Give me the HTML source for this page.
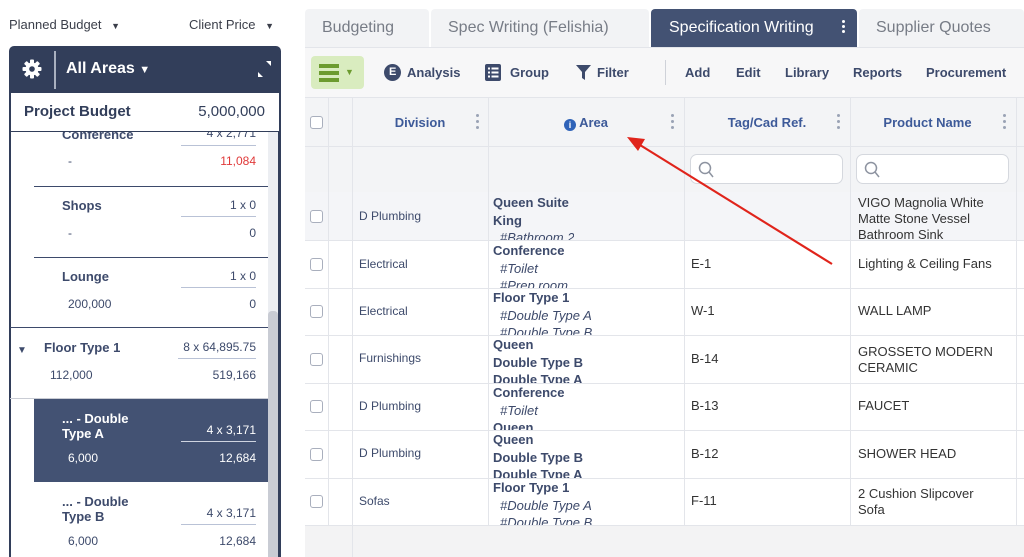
<!DOCTYPE html>
<html><head><meta charset="utf-8"><style>
*{margin:0;padding:0;box-sizing:border-box}
html,body{width:1024px;height:557px;overflow:hidden}
body{background:#fff;font-family:"Liberation Sans",sans-serif;color:#3d4a6b;position:relative}
.a{position:absolute;white-space:nowrap}
.b{font-weight:bold}
.r{text-align:right}
.ln{position:absolute;height:1px;background:#3d4a6b}
.ul{position:absolute;height:1px;background:#b9c2d6}
.cb{position:absolute;width:13px;height:13px;border:1px solid #a9afbd;border-radius:3px;background:#fff}
.vl{position:absolute;width:1px;background:#e3e5ea}
.hl{position:absolute;height:1px;background:#e3e5ea}
.dots{position:absolute;width:3px}
.dots i{display:block;width:3px;height:3px;border-radius:50%;background:#9aa3b5;margin-bottom:3px}
.it{font-style:italic}
</style></head><body>

<div class="a" style="left:9px;top:17px;font-size:13px;color:#3b3f4a">Planned Budget <span style="font-size:9px;margin-left:6px">▼</span></div>
<div class="a" style="left:189px;top:17px;font-size:13px;color:#3b3f4a">Client Price <span style="font-size:9px;margin-left:6px">▼</span></div>

<div class="a" style="left:9px;top:46px;width:272px;height:511px;background:#323e5a;border-radius:5px 5px 0 0"></div>
<div class="a" style="left:11px;top:93px;width:268px;height:464px;background:#fff"></div>
<svg class="a" style="left:22px;top:59px" width="20" height="20" viewBox="0 0 20 20"><g fill="#fff"><circle cx="10" cy="10" r="6.5"/><rect x="8" y="0.5" width="4" height="19" rx="1"/><rect x="8" y="0.5" width="4" height="19" rx="1" transform="rotate(45 10 10)"/><rect x="8" y="0.5" width="4" height="19" rx="1" transform="rotate(90 10 10)"/><rect x="8" y="0.5" width="4" height="19" rx="1" transform="rotate(135 10 10)"/></g><circle cx="10" cy="10" r="2.8" fill="#323e5a"/></svg>
<div class="a" style="left:54px;top:51px;width:2px;height:38px;background:#a9b0bf"></div>
<div class="a b" style="left:66px;top:60px;font-size:16px;color:#fff">All Areas <span style="font-size:11px">▼</span></div>
<svg class="a" style="left:256px;top:60px" width="16" height="18"><path d="M10 1 L15 1 L15 6Z" fill="#fff"/><path d="M2 12 L7 12 L7 17Z" fill="#fff" transform="rotate(180 4.5 14.5)"/></svg>
<div class="a" style="left:10px;top:93px;width:270px;height:39px;background:#fff;border:1px solid #323e5a;border-top:none"></div>
<div class="a b" style="left:24px;top:103px;font-size:15px;color:#323e5a">Project Budget</div>
<div class="a" style="left:160px;top:103px;width:105px;font-size:15px;color:#323e5a;text-align:right">5,000,000</div>

<div class="a" style="left:268px;top:132px;width:10px;height:430px;background:#eceef2"></div>
<div class="a" style="left:268px;top:311px;width:10px;height:250px;background:#c9ccd4;border-radius:4px"></div>
<div class="a" style="left:278px;top:132px;width:2px;height:430px;background:#323e5a"></div>

<div class="a b" style="left:62px;top:127px;font-size:13px;clip-path:inset(5px 0 0 0)">Conference</div>
<div class="a r" style="left:180px;top:126px;width:76px;font-size:12px;clip-path:inset(6px 0 0 0)">4 x 2,771</div>
<div class="ul" style="left:181px;top:145px;width:75px"></div>
<div class="a" style="left:68px;top:154px;font-size:12px">-</div>
<div class="a r" style="left:180px;top:154px;width:76px;font-size:12px;color:#e03a3a">11,084</div>
<div class="ln" style="left:34px;top:186px;width:234px"></div>

<div class="a b" style="left:62px;top:198px;font-size:13px">Shops</div>
<div class="a r" style="left:180px;top:198px;width:76px;font-size:12px">1 x 0</div>
<div class="ul" style="left:181px;top:216px;width:75px"></div>
<div class="a" style="left:68px;top:226px;font-size:12px">-</div>
<div class="a r" style="left:180px;top:226px;width:76px;font-size:12px">0</div>
<div class="ln" style="left:34px;top:257px;width:234px"></div>

<div class="a b" style="left:62px;top:269px;font-size:13px">Lounge</div>
<div class="a r" style="left:180px;top:269px;width:76px;font-size:12px">1 x 0</div>
<div class="ul" style="left:181px;top:287px;width:75px"></div>
<div class="a" style="left:68px;top:297px;font-size:12px">200,000</div>
<div class="a r" style="left:180px;top:297px;width:76px;font-size:12px">0</div>
<div class="ln" style="left:10px;top:327px;width:258px"></div>

<div class="a" style="left:17px;top:345px;font-size:10px">▼</div>
<div class="a b" style="left:44px;top:340px;font-size:13px">Floor Type 1</div>
<div class="a r" style="left:160px;top:340px;width:96px;font-size:12px">8 x 64,895.75</div>
<div class="ul" style="left:178px;top:358px;width:78px"></div>
<div class="a" style="left:50px;top:368px;font-size:12px">112,000</div>
<div class="a r" style="left:180px;top:368px;width:76px;font-size:12px">519,166</div>
<div class="hl" style="left:10px;top:398px;width:258px;background:#c9ccd4"></div>

<div class="a" style="left:34px;top:399px;width:234px;height:83px;background:#435273"></div>
<div class="a b" style="left:62px;top:411px;font-size:13px;color:#fff;line-height:15px">... - Double<br>Type A</div>
<div class="a r" style="left:180px;top:423px;width:76px;font-size:12px;color:#fff">4 x 3,171</div>
<div class="ul" style="left:181px;top:441px;width:75px;background:#cfd4e0"></div>
<div class="a" style="left:68px;top:451px;font-size:12px;color:#fff">6,000</div>
<div class="a r" style="left:180px;top:451px;width:76px;font-size:12px;color:#fff">12,684</div>

<div class="a b" style="left:62px;top:494px;font-size:13px;line-height:15px">... - Double<br>Type B</div>
<div class="a r" style="left:180px;top:506px;width:76px;font-size:12px">4 x 3,171</div>
<div class="ul" style="left:181px;top:524px;width:75px"></div>
<div class="a" style="left:68px;top:534px;font-size:12px">6,000</div>
<div class="a r" style="left:180px;top:534px;width:76px;font-size:12px">12,684</div>

<!-- tabs -->
<div class="a" style="left:305px;top:9px;width:124px;height:38px;background:#f2f3f5;border-radius:4px 4px 0 0;font-size:16px;color:#777c86;padding:10px 0 0 17px">Budgeting</div>
<div class="a" style="left:431px;top:9px;width:218px;height:38px;background:#f2f3f5;border-radius:4px 4px 0 0;font-size:16px;color:#777c86;padding:10px 0 0 17px">Spec Writing (Felishia)</div>
<div class="a" style="left:651px;top:9px;width:206px;height:38px;background:#435273;border-radius:4px 4px 0 0;font-size:16px;color:#fff;padding:10px 0 0 18px">Specification Writing</div>
<div class="dots" style="left:842px;top:20px"><i style="background:#fff;margin-bottom:2px"></i><i style="background:#fff;margin-bottom:2px"></i><i style="background:#fff"></i></div>
<div class="a" style="left:859px;top:9px;width:165px;height:38px;background:#f2f3f5;border-radius:4px 4px 0 0;font-size:16px;color:#777c86;padding:10px 0 0 17px">Supplier Quotes</div>

<!-- toolbar -->
<div class="a" style="left:305px;top:47px;width:719px;height:51px;background:#f7f7f8;border-top:1px solid #e3e5ea;border-bottom:1px solid #e3e5ea"></div>
<div class="a" style="left:311px;top:56px;width:53px;height:33px;background:#d9ecbf;border-radius:4px"></div>
<div class="a" style="left:319px;top:64px;width:20px;height:3.5px;background:#6c9b2f"></div>
<div class="a" style="left:319px;top:71px;width:20px;height:3.5px;background:#6c9b2f"></div>
<div class="a" style="left:319px;top:78px;width:20px;height:3.5px;background:#6c9b2f"></div>
<div class="a" style="left:345px;top:67px;font-size:9px;color:#6c9b2f">▼</div>
<div class="a" style="left:384px;top:64px;width:17px;height:17px;border-radius:50%;background:#3d4a6b"></div>
<div class="a b" style="left:389px;top:66px;font-size:11px;color:#fff">E</div>
<div class="a b" style="left:407px;top:65px;font-size:13px">Analysis</div>
<svg class="a" style="left:485px;top:64px" width="16" height="17"><rect width="16" height="17" rx="2" fill="#3d4a6b"/><g fill="#fff"><rect x="3" y="3.5" width="2" height="2"/><rect x="6.5" y="3.5" width="7" height="2"/><rect x="3" y="7.5" width="2" height="2"/><rect x="6.5" y="7.5" width="7" height="2"/><rect x="3" y="11.5" width="2" height="2"/><rect x="6.5" y="11.5" width="7" height="2"/></g></svg>
<div class="a b" style="left:510px;top:65px;font-size:13px">Group</div>
<svg class="a" style="left:576px;top:65px" width="15" height="16"><path d="M0 0H15L9 7V15L6 13V7Z" fill="#3d4a6b"/></svg>
<div class="a b" style="left:597px;top:65px;font-size:13px">Filter</div>
<div class="a" style="left:665px;top:60px;width:1px;height:25px;background:#cfd2d9"></div>
<div class="a b" style="left:685px;top:65px;font-size:13px">Add</div>
<div class="a b" style="left:736px;top:65px;font-size:13px">Edit</div>
<div class="a b" style="left:785px;top:65px;font-size:13px">Library</div>
<div class="a b" style="left:853px;top:65px;font-size:13px">Reports</div>
<div class="a b" style="left:926px;top:65px;font-size:13px">Procurement</div>

<!-- table header -->
<div class="a" style="left:305px;top:98px;width:719px;height:94px;background:#f3f4f6"></div>
<div class="cb" style="left:310px;top:116px"></div>
<div class="a b" style="left:352px;top:115px;width:136px;text-align:center;font-size:13px;color:#3d5a99">Division</div>
<div class="a b" style="left:488px;top:115px;width:196px;text-align:center;font-size:13px;color:#3d5a99"><span style="display:inline-block;width:12px;height:12px;border-radius:50%;background:#2f63b8;color:#fff;font-size:9px;line-height:12px;text-align:center;vertical-align:-1px">i</span> Area</div>
<div class="a b" style="left:684px;top:115px;width:166px;text-align:center;font-size:13px;color:#3d5a99">Tag/Cad Ref.</div>
<div class="a b" style="left:850px;top:115px;width:155px;text-align:center;font-size:13px;color:#3d5a99">Product Name</div>
<div class="dots" style="left:476px;top:114px"><i></i><i></i><i></i></div>
<div class="dots" style="left:671px;top:114px"><i></i><i></i><i></i></div>
<div class="dots" style="left:837px;top:114px"><i></i><i></i><i></i></div>
<div class="dots" style="left:1003px;top:114px"><i></i><i></i><i></i></div>
<div class="hl" style="left:305px;top:146px;width:719px"></div>
<div class="a" style="left:690px;top:154px;width:153px;height:30px;background:#fff;border:1px solid #d5d8de;border-radius:7px"></div>
<div class="a" style="left:856px;top:154px;width:153px;height:30px;background:#fff;border:1px solid #d5d8de;border-radius:7px"></div>
<svg class="a" style="left:698px;top:161px" width="16" height="17"><circle cx="7" cy="7" r="5.5" fill="none" stroke="#8d93a0" stroke-width="1.5"/><path d="M11 11L15 16" stroke="#8d93a0" stroke-width="1.5"/></svg>
<svg class="a" style="left:864px;top:161px" width="16" height="17"><circle cx="7" cy="7" r="5.5" fill="none" stroke="#8d93a0" stroke-width="1.5"/><path d="M11 11L15 16" stroke="#8d93a0" stroke-width="1.5"/></svg>

<div class="a" style="left:305px;top:192px;width:719px;height:48px;background:#f4f5f8"></div>
<div class="a" style="left:305px;top:525px;width:719px;height:32px;background:#f3f3f4"></div>
<div class="vl" style="left:328px;top:98px;height:427px"></div>
<div class="vl" style="left:352px;top:98px;height:459px"></div>
<div class="vl" style="left:488px;top:98px;height:427px"></div>
<div class="vl" style="left:684px;top:98px;height:427px"></div>
<div class="vl" style="left:850px;top:98px;height:427px"></div>
<div class="vl" style="left:1016px;top:98px;height:427px"></div>
<div class="hl" style="left:305px;top:240px;width:719px"></div>
<div class="hl" style="left:305px;top:288px;width:719px"></div>
<div class="hl" style="left:305px;top:335px;width:719px"></div>
<div class="hl" style="left:305px;top:383px;width:719px"></div>
<div class="hl" style="left:305px;top:430px;width:719px"></div>
<div class="hl" style="left:305px;top:478px;width:719px"></div>
<div class="hl" style="left:305px;top:525px;width:719px"></div>

<div style="position:absolute;left:0;top:0;font-size:13px">
<div class="cb" style="left:310px;top:210px"></div>
<div class="a" style="left:359px;top:209px;font-size:12px">D Plumbing</div>
<div class="a b" style="left:493px;top:192px;height:48px;overflow:hidden;line-height:17.5px;padding-top:2px">Queen Suite<br>King<br><span class="it" style="font-weight:normal;padding-left:7px">#Bathroom 2</span></div>
<div class="a" style="left:858px;top:195px;line-height:16px;color:#333">VIGO Magnolia White<br>Matte Stone Vessel<br>Bathroom Sink</div>
<div class="cb" style="left:310px;top:258px"></div>
<div class="a" style="left:359px;top:257px;font-size:12px">Electrical</div>
<div class="a b" style="left:493px;top:240px;height:48px;overflow:hidden;line-height:17.5px;padding-top:2px">Conference<br><span class="it" style="font-weight:normal;padding-left:7px">#Toilet</span><br><span class="it" style="font-weight:normal;padding-left:7px">#Prep room</span></div>
<div class="a" style="left:691px;top:256px;color:#333">E-1</div>
<div class="a" style="left:858px;top:256px;color:#333">Lighting &amp; Ceiling Fans</div>
<div class="cb" style="left:310px;top:305px"></div>
<div class="a" style="left:359px;top:304px;font-size:12px">Electrical</div>
<div class="a b" style="left:493px;top:288px;height:47px;overflow:hidden;line-height:17.5px;padding-top:1px">Floor Type 1<br><span class="it" style="font-weight:normal;padding-left:7px">#Double Type A</span><br><span class="it" style="font-weight:normal;padding-left:7px">#Double Type B</span></div>
<div class="a" style="left:691px;top:303px;color:#333">W-1</div>
<div class="a" style="left:858px;top:303px;color:#333">WALL LAMP</div>
<div class="cb" style="left:310px;top:353px"></div>
<div class="a" style="left:359px;top:351px;font-size:12px">Furnishings</div>
<div class="a b" style="left:493px;top:335px;height:48px;overflow:hidden;line-height:17.5px;padding-top:1px">Queen<br>Double Type B<br>Double Type A</div>
<div class="a" style="left:691px;top:351px;color:#333">B-14</div>
<div class="a" style="left:858px;top:344px;line-height:16px;color:#333">GROSSETO MODERN<br>CERAMIC</div>
<div class="cb" style="left:310px;top:400px"></div>
<div class="a" style="left:359px;top:399px;font-size:12px">D Plumbing</div>
<div class="a b" style="left:493px;top:383px;height:47px;overflow:hidden;line-height:17.5px;padding-top:1px">Conference<br><span class="it" style="font-weight:normal;padding-left:7px">#Toilet</span><br>Queen</div>
<div class="a" style="left:691px;top:398px;color:#333">B-13</div>
<div class="a" style="left:858px;top:398px;color:#333">FAUCET</div>
<div class="cb" style="left:310px;top:448px"></div>
<div class="a" style="left:359px;top:446px;font-size:12px">D Plumbing</div>
<div class="a b" style="left:493px;top:430px;height:48px;overflow:hidden;line-height:17.5px;padding-top:1px">Queen<br>Double Type B<br>Double Type A</div>
<div class="a" style="left:691px;top:446px;color:#333">B-12</div>
<div class="a" style="left:858px;top:446px;color:#333">SHOWER HEAD</div>
<div class="cb" style="left:310px;top:495px"></div>
<div class="a" style="left:359px;top:494px;font-size:12px">Sofas</div>
<div class="a b" style="left:493px;top:478px;height:47px;overflow:hidden;line-height:17.5px;padding-top:1px">Floor Type 1<br><span class="it" style="font-weight:normal;padding-left:7px">#Double Type A</span><br><span class="it" style="font-weight:normal;padding-left:7px">#Double Type B</span></div>
<div class="a" style="left:691px;top:493px;color:#333">F-11</div>
<div class="a" style="left:858px;top:486px;line-height:16px;color:#333">2 Cushion Slipcover<br>Sofa</div>
</div>

<svg class="a" style="left:0;top:0" width="1024" height="557"><line x1="832" y1="264" x2="640" y2="145" stroke="#e0241b" stroke-width="2.2"/><path d="M627 137 L645 139 L638 151Z" fill="#e0241b"/></svg>
</body></html>
